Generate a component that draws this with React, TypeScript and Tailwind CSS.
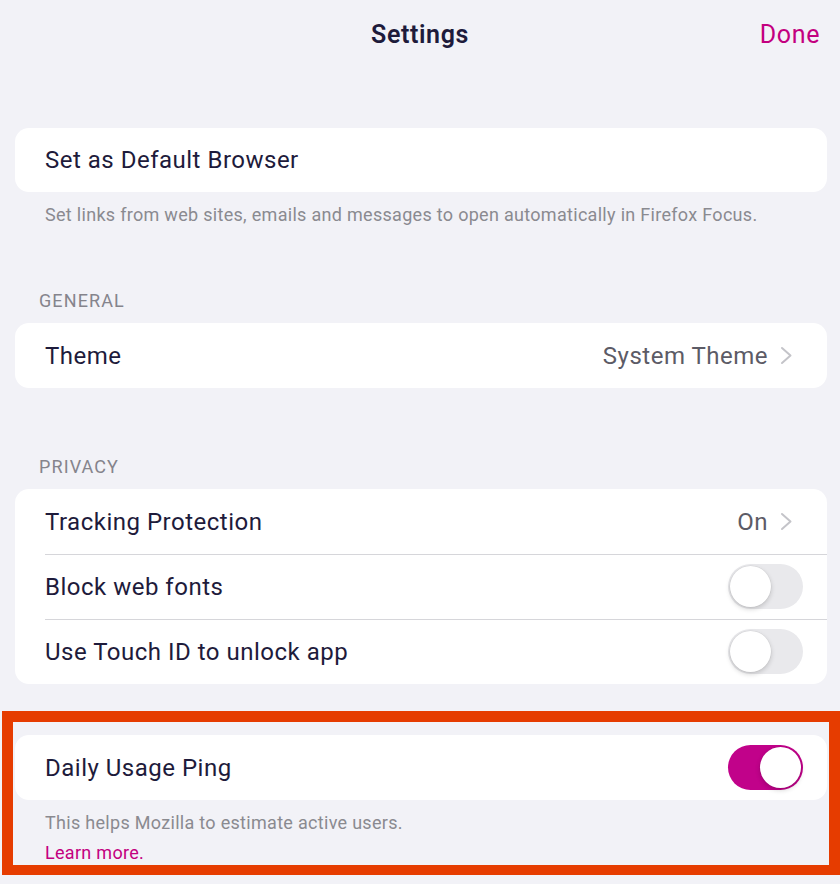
const ink = "text-[#1e1b3b]";

function Chevron() {
  return (
    <svg width="13" height="19" viewBox="0 0 13 19" className="text-[#c4c4c9]">
      <polyline points="2,2 10.5,9.5 2,17" fill="none" stroke="currentColor" strokeWidth="2" strokeLinecap="round" strokeLinejoin="round" />
    </svg>
  );
}

function Toggle({ on }: { on: boolean }) {
  return (
    <div
      className={`w-[75px] h-[45px] rounded-full p-[2px] flex items-center ${
        on ? "bg-[#c1028a] justify-end" : "bg-[#e9e9ec] justify-start"
      }`}
    >
      <div className="w-[41px] h-[41px] rounded-full bg-white shadow-[0_2px_5px_rgba(0,0,0,0.18),0_0_0_0.5px_rgba(0,0,0,0.06)]" />
    </div>
  );
}

function Row({ label, value, toggle, sep }: { label: string; value?: string; toggle?: boolean; sep?: boolean }) {
  return (
    <div className="h-[65px] flex items-center pl-[30px] relative">
      {sep && <div className="absolute top-0 left-[30px] right-0 h-px bg-[#d6d6da]" />}
      <span className={`flex-1 text-[24px] tracking-[0.5px] ${ink}`}>{label}</span>
      {value !== undefined && (
        <div className="flex items-center pr-[34px] gap-[12px]">
          <span className="text-[24px] tracking-[0.5px] text-[#5c5b66]">{value}</span>
          <Chevron />
        </div>
      )}
      {toggle !== undefined && (
        <div className="pr-[24px]">
          <Toggle on={toggle} />
        </div>
      )}
    </div>
  );
}

export default function App() {
  return (
    <div className="relative w-[840px] h-[884px] overflow-hidden bg-[#f2f2f7]" style={{ fontFamily: "Roboto, 'Noto Sans', sans-serif" }}>
      {/* Nav bar */}
      <div className="h-[70px] grid grid-cols-[1fr_auto_1fr] items-center">
        <div />
        <span className={`text-[25px] font-semibold tracking-[0.6px] ${ink}`}>Settings</span>
        <span className="justify-self-end pr-[20px] text-[25px] tracking-[0.6px] text-[#c3007f]">Done</span>
      </div>

      {/* Default browser */}
      <div className="ml-[15px] mr-[13px] mt-[58px] bg-white rounded-[14px] overflow-hidden">
        <div className="h-[64px] flex items-center pl-[30px]">
          <span className={`text-[24px] tracking-[0.5px] ${ink}`}>Set as Default Browser</span>
        </div>
      </div>
      <p className="ml-[45px] mt-[12px] text-[18px] leading-[22px] tracking-[0.3px] text-[#8a8a90]">
        Set links from web sites, emails and messages to open automatically in Firefox Focus.
      </p>

      {/* General */}
      <p className="ml-[39px] mt-[64px] text-[18px] leading-[22px] tracking-[1.1px] text-[#85848c]">GENERAL</p>
      <div className="ml-[15px] mr-[13px] mt-[11px] bg-white rounded-[14px] overflow-hidden">
        <Row label="Theme" value="System Theme" />
      </div>

      {/* Privacy */}
      <p className="ml-[39px] mt-[68px] text-[18px] leading-[22px] tracking-[1.1px] text-[#85848c]">PRIVACY</p>
      <div className="ml-[15px] mr-[13px] mt-[11px] bg-white rounded-[14px] overflow-hidden">
        <Row label="Tracking Protection" value="On" />
        <Row label="Block web fonts" toggle={false} sep />
        <Row label="Use Touch ID to unlock app" toggle={false} sep />
      </div>

      {/* Usage ping */}
      <div className="ml-[15px] mr-[13px] mt-[51px] bg-white rounded-[14px] overflow-hidden">
        <Row label="Daily Usage Ping" toggle={true} />
      </div>
      <p className="ml-[45px] mt-[12px] text-[18px] leading-[22px] tracking-[0.3px] text-[#8a8a90]">This helps Mozilla to estimate active users.</p>
      <p className="ml-[45px] mt-[8px] text-[18px] leading-[22px] tracking-[0.3px] text-[#c3007f]">Learn more.</p>

      {/* Highlight annotation */}
      <div className="absolute left-[2px] top-[711px] w-[838px] h-[164px] border-[11px] border-b-[10px] border-[#e63c00] pointer-events-none" />
    </div>
  );
}
